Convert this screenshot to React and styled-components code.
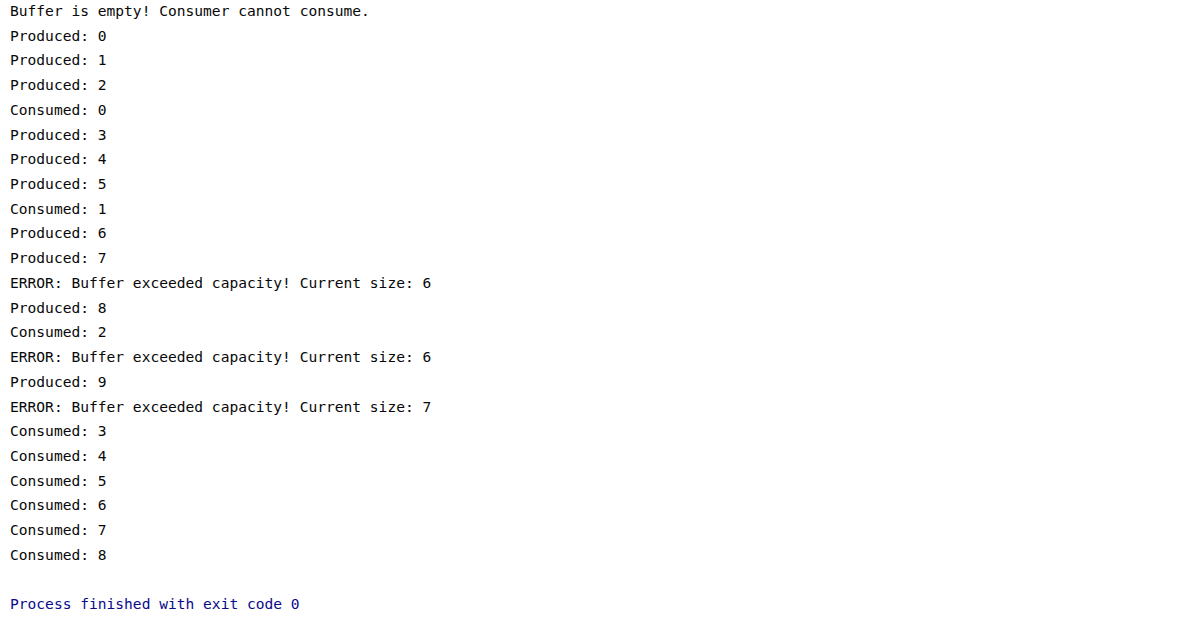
import styled, { createGlobalStyle } from "styled-components";

const GlobalStyle = createGlobalStyle`
  html, body {
    margin: 0;
    padding: 0;
    background: #ffffff;
  }
`;

const Console = styled.div`
  display: flex;
  flex-direction: column;
  margin-top: -1px;
  padding-left: 10px;
  font-family: "DejaVu Sans Mono", "Liberation Mono", monospace;
  font-size: 14.58px;
  line-height: 24.72px;
  white-space: pre;
`;

const Line = styled.div`
  height: 24.72px;
  color: ${(p) => (p.$system ? "#0a0a8c" : "#080808")};
`;

const lines = [
  "Buffer is empty! Consumer cannot consume.",
  "Produced: 0",
  "Produced: 1",
  "Produced: 2",
  "Consumed: 0",
  "Produced: 3",
  "Produced: 4",
  "Produced: 5",
  "Consumed: 1",
  "Produced: 6",
  "Produced: 7",
  "ERROR: Buffer exceeded capacity! Current size: 6",
  "Produced: 8",
  "Consumed: 2",
  "ERROR: Buffer exceeded capacity! Current size: 6",
  "Produced: 9",
  "ERROR: Buffer exceeded capacity! Current size: 7",
  "Consumed: 3",
  "Consumed: 4",
  "Consumed: 5",
  "Consumed: 6",
  "Consumed: 7",
  "Consumed: 8",
  "",
];

export default function App() {
  return (
    <>
      <GlobalStyle />
      <Console>
        {lines.map((text, i) => (
          <Line key={i}>{text}</Line>
        ))}
        <Line $system>Process finished with exit code 0</Line>
      </Console>
    </>
  );
}
